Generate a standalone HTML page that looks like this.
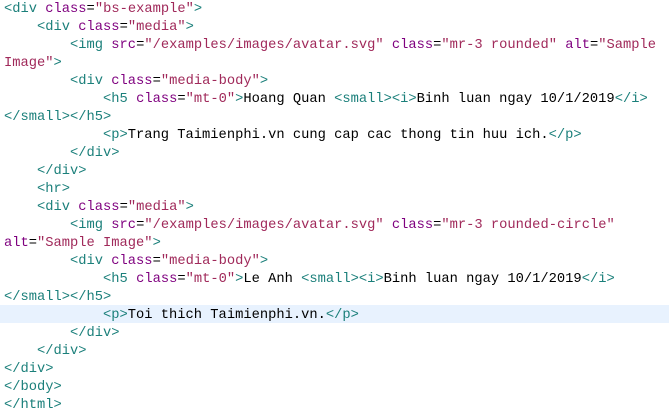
<!DOCTYPE html>
<html><head><style>
body{margin:0;background:#fff;width:669px;height:419px;overflow:hidden}
pre{margin:0;padding:1px 0 0 4px;font-family:"Liberation Mono","DejaVu Sans Mono",monospace;font-size:13.75px;line-height:18px;color:#000}
.t{color:#1a7f7a}.a{color:#7f007f}.v{color:#a0295a}
.hl{position:absolute;left:0;top:305px;width:669px;height:18px;background:#e8f2fe;z-index:-1}
</style></head><body>
<div class="hl"></div>
<pre><span class="t">&lt;div</span> <span class="a">class</span>=<span class="v">"bs-example"</span><span class="t">&gt;</span>
    <span class="t">&lt;div</span> <span class="a">class</span>=<span class="v">"media"</span><span class="t">&gt;</span>
        <span class="t">&lt;img</span> <span class="a">src</span>=<span class="v">"/examples/images/avatar.svg"</span> <span class="a">class</span>=<span class="v">"mr-3 rounded"</span> <span class="a">alt</span>=<span class="v">"Sample</span>
<span class="v">Image"</span><span class="t">&gt;</span>
        <span class="t">&lt;div</span> <span class="a">class</span>=<span class="v">"media-body"</span><span class="t">&gt;</span>
            <span class="t">&lt;h5</span> <span class="a">class</span>=<span class="v">"mt-0"</span><span class="t">&gt;</span>Hoang Quan <span class="t">&lt;small&gt;&lt;i&gt;</span>Binh luan ngay 10/1/2019<span class="t">&lt;/i&gt;</span>
<span class="t">&lt;/small&gt;&lt;/h5&gt;</span>
            <span class="t">&lt;p&gt;</span>Trang Taimienphi.vn cung cap cac thong tin huu ich.<span class="t">&lt;/p&gt;</span>
        <span class="t">&lt;/div&gt;</span>
    <span class="t">&lt;/div&gt;</span>
    <span class="t">&lt;hr&gt;</span>
    <span class="t">&lt;div</span> <span class="a">class</span>=<span class="v">"media"</span><span class="t">&gt;</span>
        <span class="t">&lt;img</span> <span class="a">src</span>=<span class="v">"/examples/images/avatar.svg"</span> <span class="a">class</span>=<span class="v">"mr-3 rounded-circle"</span>
<span class="a">alt</span>=<span class="v">"Sample Image"</span><span class="t">&gt;</span>
        <span class="t">&lt;div</span> <span class="a">class</span>=<span class="v">"media-body"</span><span class="t">&gt;</span>
            <span class="t">&lt;h5</span> <span class="a">class</span>=<span class="v">"mt-0"</span><span class="t">&gt;</span>Le Anh <span class="t">&lt;small&gt;&lt;i&gt;</span>Binh luan ngay 10/1/2019<span class="t">&lt;/i&gt;</span>
<span class="t">&lt;/small&gt;&lt;/h5&gt;</span>
            <span class="t">&lt;p&gt;</span>Toi thich Taimienphi.vn.<span class="t">&lt;/p&gt;</span>
        <span class="t">&lt;/div&gt;</span>
    <span class="t">&lt;/div&gt;</span>
<span class="t">&lt;/div&gt;</span>
<span class="t">&lt;/body&gt;</span>
<span class="t">&lt;/html&gt;</span></pre>
</body></html>
